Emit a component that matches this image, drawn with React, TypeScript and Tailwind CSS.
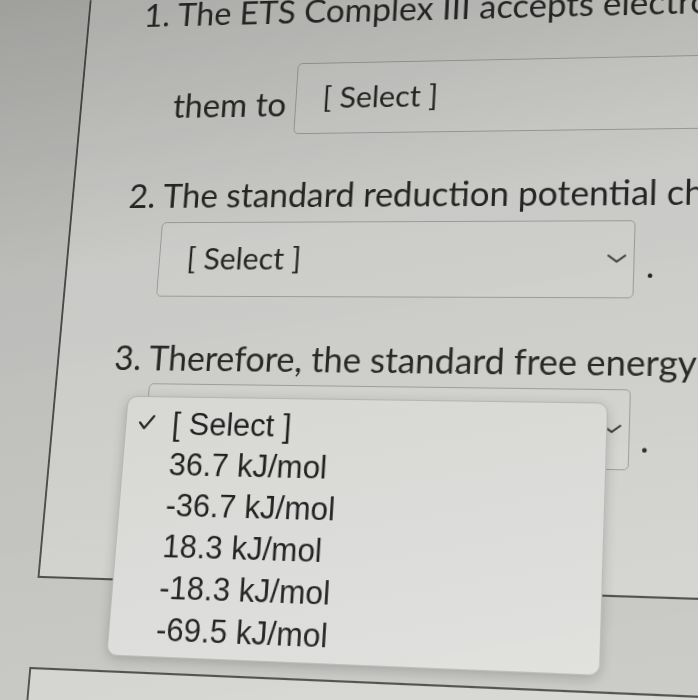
import React from "react";

const Chevron = () => (
  <svg width="18" height="8" viewBox="0 0 18 8" fill="none" className="shrink-0">
    <path d="M1 1 L9 7 L17 1" stroke="#3c3c3a" strokeWidth="2" strokeLinecap="round" strokeLinejoin="round" />
  </svg>
);

const Check = () => (
  <svg width="18" height="16" viewBox="0 0 18 16" fill="none">
    <path d="M2 8.5 L6.5 14 L16 2" stroke="#262626" strokeWidth="2.3" strokeLinecap="round" strokeLinejoin="round" />
  </svg>
);

function SelectBox() {
  return (
    <div className="flex w-[474px] h-[77px] shrink-0 items-start justify-between rounded-[5px] border border-[#a3a3a0] bg-[#dadad7] pl-[28px] pr-[7px] pt-[18px] text-[31px]">
      <span className="leading-[36px]">[ Select ]</span>
      <span className="mt-[15px]">
        <Chevron />
      </span>
    </div>
  );
}

const options = ["36.7 kJ/mol", "-36.7 kJ/mol", "18.3 kJ/mol", "-18.3 kJ/mol", "-69.5 kJ/mol"];

export default function App() {
  return (
    <div className="relative w-[698px] h-[700px] overflow-hidden bg-[#c9c9c6] text-[#262625] font-['Lato','Noto_Sans',sans-serif] text-[34.5px]">
      <div className="w-[780px] h-[760px] origin-top-left [transform:matrix3d(0.911673,-0.024664,0,-0.000097036,-0.091784,0.911799,0,-0.00010351,0,0,1,0,-5.1993,-5.1779,0,1.018677)]">
        {/* question panel */}
        <div className="relative ml-[105px] w-[675px] h-[600px] border-l-2 border-b-2 border-[#4c4c4a] bg-[#d7d7d4]">
          <div className="mt-[8px] h-[36px] pl-[59px] leading-[36px] whitespace-nowrap">
            1. The ETS Complex III accepts electrons from ubiquinol and passes
          </div>

          <div className="mt-[38px] flex h-[75px] items-start pl-[98px]">
            <div className="w-[128px] shrink-0 pt-[25px] leading-[36px] whitespace-nowrap">them to</div>
            <div className="flex w-[474px] h-[75px] shrink-0 items-start rounded-[5px] border border-[#a3a3a0] bg-[#dadad7] pl-[27px] pt-[17px] text-[31px]">
              <span className="leading-[36px]">[ Select ]</span>
            </div>
          </div>

          <div className="mt-[45px] h-[36px] pl-[59px] leading-[36px] whitespace-nowrap">
            2. The standard reduction potential change for this transfer is
          </div>

          <div className="mt-[10px] flex items-start pl-[96px]">
            <SelectBox />
            <span className="ml-[11px] mt-[26px] leading-[36px]">.</span>
          </div>

          <div className="mt-[44px] h-[36px] pl-[58px] leading-[36px] whitespace-nowrap">
            3. Therefore, the standard free energy change is
          </div>

          <div className="mt-[8px] flex items-start pl-[96px]">
            <SelectBox />
            <span className="ml-[10px] mt-[29px] leading-[36px]">.</span>
          </div>

          {/* open option list */}
          <div className="absolute left-[75px] top-[418px] w-[474px] h-[254px] rounded-[10px] border border-[#bcbcb9] bg-[#e1e1de] pt-[7px] pl-[12px] shadow-[0_3px_12px_rgba(0,0,0,0.2)] font-['Liberation_Sans','Arial',sans-serif] text-[31px] text-[#1c1c1c]">
            <div className="flex h-[40px] items-center">
              <span className="flex w-[35px] items-center pb-[4px]">
                <Check />
              </span>
              <span className="leading-[40px]">[ Select ]</span>
            </div>
            {options.map((o) => (
              <div key={o} className="flex h-[40px] items-center">
                <span className="w-[35px]" />
                <span className="leading-[40px]">{o}</span>
              </div>
            ))}
          </div>
        </div>

        <div className="ml-[105px] mt-[86px] w-[675px] h-[80px] border-l-2 border-t-2 border-[#4c4c4a] bg-[#d7d7d4]" />
      </div>

      {/* lighting falloff across the screen */}
      <div className="pointer-events-none absolute inset-0 bg-[linear-gradient(170deg,rgba(30,30,28,0.24)_0%,rgba(30,30,28,0.07)_35%,rgba(255,255,255,0.06)_100%)]" />
    </div>
  );
}
